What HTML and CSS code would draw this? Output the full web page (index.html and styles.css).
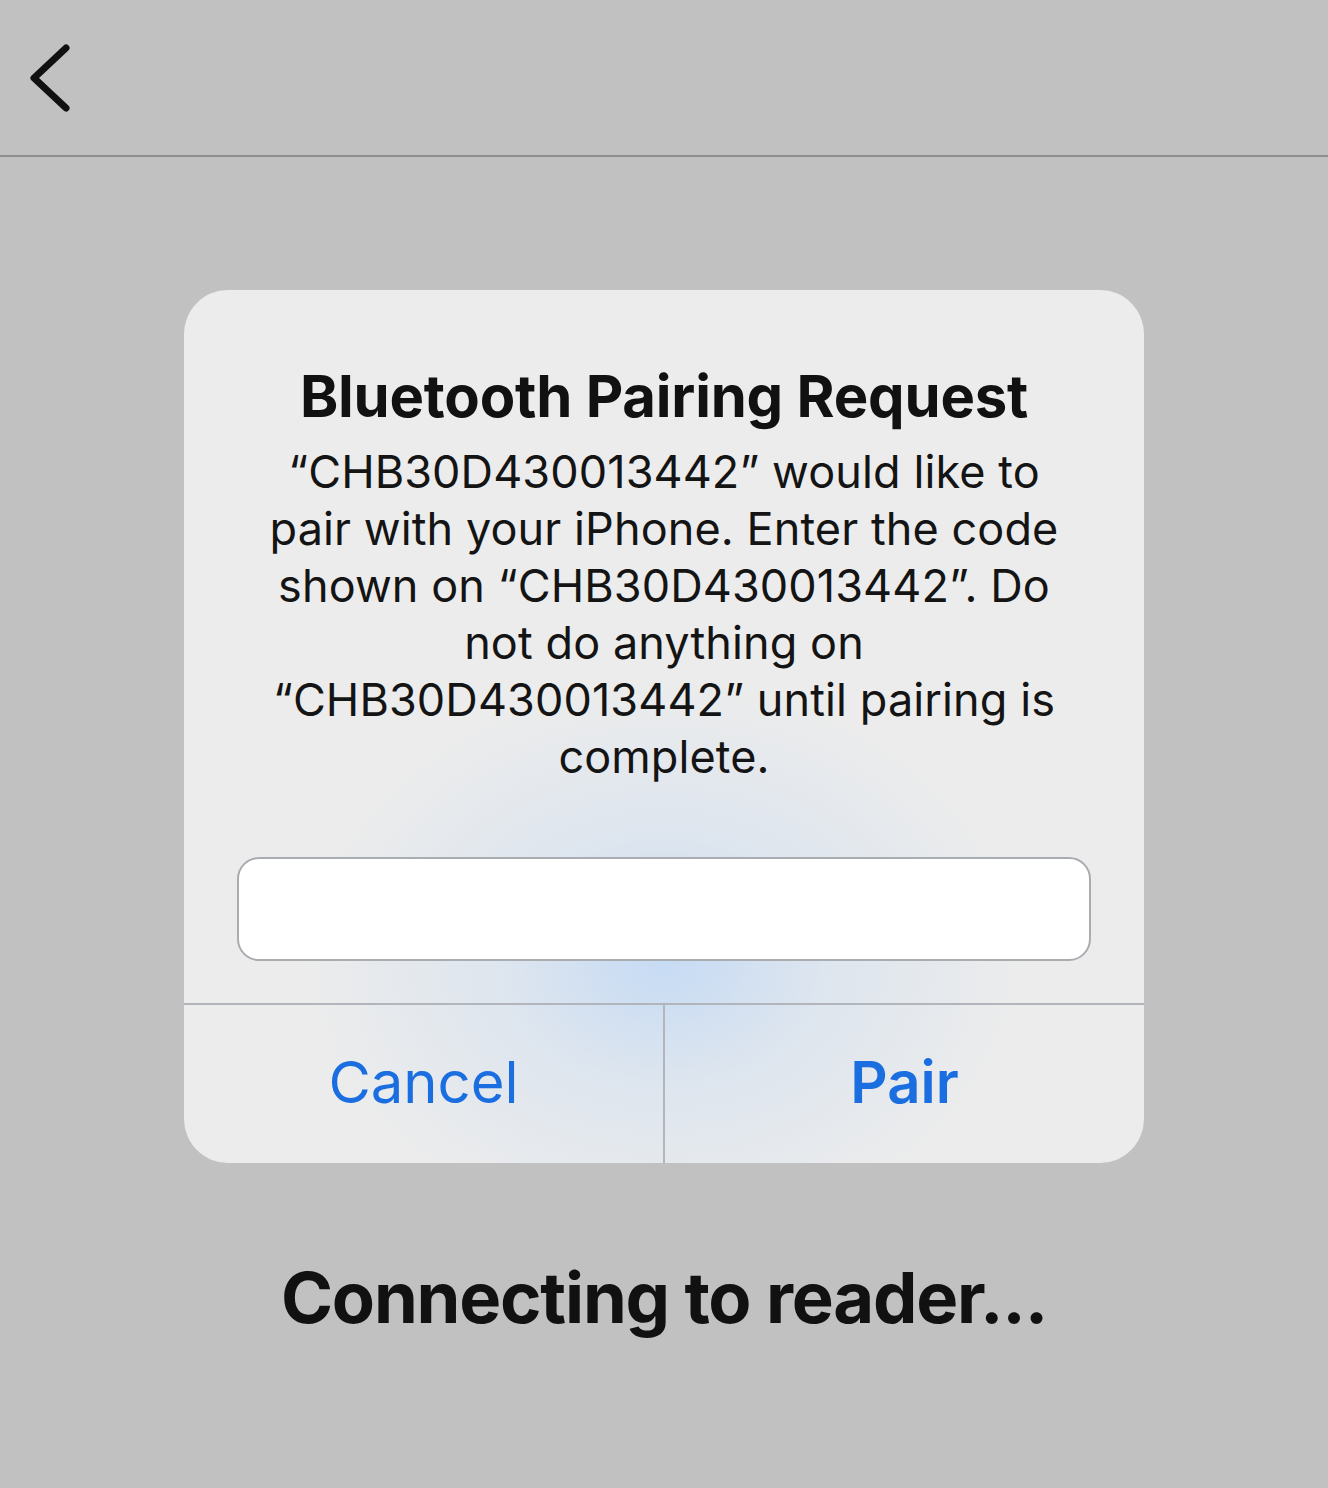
FILE: index.html
```html
<!DOCTYPE html>
<html>
<head>
<meta charset="utf-8">
<link rel="stylesheet" href="styles.css">
</head>
<body>
<header class="topbar">
  <svg class="back" width="60" height="80" viewBox="0 0 60 80">
    <path d="M38 16 L6 46 L38 76" fill="none" stroke="#111" stroke-width="7" stroke-linecap="round" stroke-linejoin="round"/>
  </svg>
</header>
<main class="content">
  <div class="alert">
    <div class="alert-body">
      <h1 class="alert-title">Bluetooth Pairing Request</h1>
      <p class="alert-msg">“CHB30D430013442” would like to<br>pair with your iPhone. Enter the code<br>shown on “CHB30D430013442”. Do<br>not do anything on<br>“CHB30D430013442” until pairing is<br>complete.</p>
      <div class="field"></div>
    </div>
    <div class="actions">
      <div class="btn">Cancel</div>
      <div class="btn btn-bold">Pair</div>
    </div>
  </div>
  <div class="status">Connecting to reader...</div>
</main>
</body>
</html>
```
FILE: styles.css
```css
html, body {
  margin: 0;
  padding: 0;
  background: #c1c1c1;
  font-family: "Inter", "Noto Sans", sans-serif;
  color: #111;
}
body {
  width: 1328px;
  height: 1488px;
  overflow: hidden;
}
.topbar {
  height: 157px;
  border-bottom: 2px solid #8e8e8e;
  box-sizing: border-box;
  display: flex;
  align-items: flex-start;
}
.back {
  margin-left: 28px;
  margin-top: 32px;
}
.content {
  display: flex;
  flex-direction: column;
  align-items: center;
}
.alert {
  margin-top: 133px;
  width: 960px;
  border-radius: 44px;
  overflow: hidden;
  background:
    radial-gradient(ellipse 360px 280px at 480px 670px, rgba(198, 219, 244, 1), rgba(212, 225, 240, 0.6) 45%, rgba(236, 236, 236, 0) 100%),
    #ececec;
}
.alert-body {
  padding: 66px 30px 42px;
  text-align: center;
}
.alert-title {
  margin: 0 0 7px;
  font-size: 58px;
  font-weight: 700;
  line-height: 80px;
  letter-spacing: -0.2px;
  color: #111;
}
.alert-msg {
  margin: 0;
  font-size: 45px;
  line-height: 57px;
  font-weight: 400;
  letter-spacing: 0.1px;
  color: #141414;
  white-space: nowrap;
}
.field {
  margin: 72px 23px 0;
  height: 104px;
  background: #fff;
  border: 2px solid #a9acb1;
  border-radius: 22px;
  box-sizing: border-box;
}
.actions {
  display: flex;
  border-top: 2px solid #b2b6bc;
  height: 158px;
}
.btn {
  flex: 1;
  display: flex;
  align-items: center;
  justify-content: center;
  font-size: 58px;
  color: #1a6ee0;
  padding-bottom: 4px;
}
.btn + .btn {
  border-left: 2px solid #b2b6bc;
}
.btn-bold {
  font-weight: 600;
}
.status {
  margin-top: 92px;
  font-size: 70.5px;
  font-weight: 700;
  letter-spacing: -1.2px;
  color: #111;
}
```
